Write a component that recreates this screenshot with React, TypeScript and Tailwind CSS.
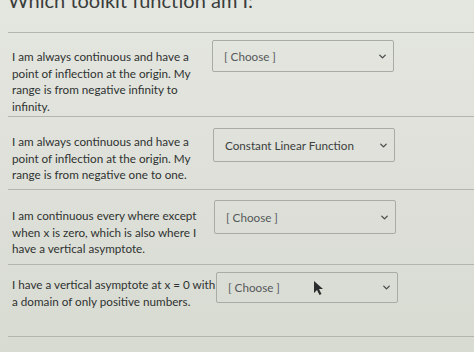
import { ChevronDown } from 'lucide-react';

interface Row {
  lines: string[];
  value: string;
  height: number;
  textTop: number;
  selectTop: number;
  selectLeft: number;
  selectH: number;
}

const ROWS: Row[] = [
  {
    lines: ['I am always continuous and have a', 'point of inflection at the origin. My', 'range is from negative infinity to', 'infinity.'],
    value: '[ Choose ]',
    height: 83,
    textTop: 15,
    selectTop: 7,
    selectLeft: 0,
    selectH: 32,
  },
  {
    lines: ['I am always continuous and have a', 'point of inflection at the origin. My', 'range is from negative one to one.'],
    value: 'Constant Linear Function',
    height: 72,
    textTop: 16,
    selectTop: 11,
    selectLeft: 1,
    selectH: 34,
  },
  {
    lines: ['I am continuous every where except', 'when x is zero, which is also where I', 'have a vertical asymptote.'],
    value: '[ Choose ]',
    height: 74,
    textTop: 17,
    selectTop: 10,
    selectLeft: 2,
    selectH: 34,
  },
  {
    lines: ['I have a vertical asymptote at x = 0 with', 'a domain of only positive numbers.'],
    value: '[ Choose ]',
    height: 71,
    textTop: 11,
    selectTop: 7,
    selectLeft: 4,
    selectH: 31,
  },
];

function Select({ value, h, ml, mt, pointer }: { value: string; h: number; ml: number; mt: number; pointer?: boolean }) {
  return (
    <div
      className="relative flex items-center justify-between w-[182px] border border-[#a9aca6] rounded-[2px] pl-[11px] pr-[5px] text-[#3c3f3e]"
      style={{ height: h, marginLeft: ml, marginTop: mt }}
    >
      <span className={value.startsWith('[') ? 'text-[#55585a]' : ''}>{value}</span>
      <ChevronDown size={11} strokeWidth={3} className="text-[#4a4d4c]" />
      {pointer && (
        <svg className="absolute left-[96px] top-[7px]" width="12" height="16" viewBox="0 0 12 16">
          <path d="M1 1 L1 13 L4 10 L6.5 15 L8.5 14 L6 9 L10 9 Z" fill="#2a2c2d" />
        </svg>
      )}
    </div>
  );
}

export default function App() {
  return (
    <div
      className="w-[474px] h-[352px] overflow-hidden bg-gradient-to-b from-[#e4e6e0] to-[#d8dbd2] text-[11.7px] leading-[16.5px] text-[#2f3231]"
      style={{ fontFamily: 'Lato, "Open Sans", sans-serif' }}
    >
      <div className="pl-[8px] -mt-[10px] text-[20px] leading-[20px] text-[#3a3d3c] h-[42px]">
        Which toolkit function am I:
      </div>
      <div className="ml-[8px] border-t border-[#b3b6af]" />
      {ROWS.map((r, i) => (
        <div key={i} className="ml-[8px] border-b border-[#b3b6af]">
          <div className="flex items-start" style={{ height: r.height }}>
            <div className="w-[204px] pl-[4px] whitespace-nowrap" style={{ paddingTop: r.textTop }}>
              {r.lines.map((l, j) => (
                <div key={j}>{l}</div>
              ))}
            </div>
            <Select value={r.value} h={r.selectH} ml={r.selectLeft} mt={r.selectTop} pointer={i === 3} />
          </div>
        </div>
      ))}
    </div>
  );
}
